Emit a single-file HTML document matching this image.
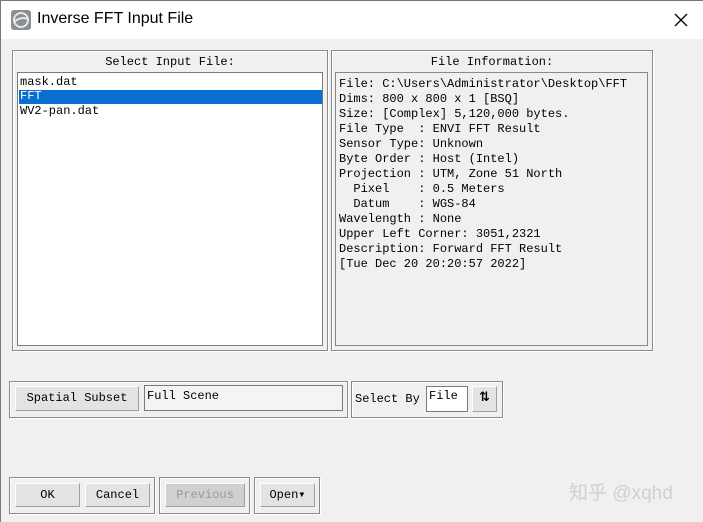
<!DOCTYPE html><html><head><style>
body{margin:0;width:703px;height:522px;background:#f0f0f0;position:relative;overflow:hidden;font-family:"Liberation Mono","Noto Sans CJK SC",monospace;font-size:12px;color:#000}
.a{position:absolute;box-sizing:border-box}
.fr{border:1px solid #8a8a8a;box-shadow:inset 1px 1px 0 #fff,1px 1px 0 #fff}
.in{border:1px solid #7a7a7a;background:#fff}
.bt{background:#e3e3e3;border:1px solid #fff;border-right-color:#a0a0a0;border-bottom-color:#a0a0a0;text-align:center;line-height:22px}
.t{white-space:pre;line-height:15px}
</style></head><body>
<div class="a" style="left:0;top:0;width:703px;height:39px;background:#fff;border-left:1px solid #777;border-top:1px solid #777"></div>
<svg class="a" style="left:10px;top:9px" width="22" height="22" viewBox="0 0 22 22"><rect x="1" y="1" width="20" height="20" rx="3" fill="#8a8f96"/><circle cx="11" cy="11" r="7" fill="none" stroke="#e8e8e8" stroke-width="2"/><path d="M4 13 Q11 7 18 10" stroke="#e8e8e8" stroke-width="2" fill="none"/></svg>
<div class="a" style="left:37px;top:10px;font-family:'Liberation Sans',sans-serif;font-size:16px">Inverse FFT Input File</div>
<svg class="a" style="left:674px;top:13px" width="14" height="14" viewBox="0 0 14 14"><path d="M1 1L13 13M13 1L1 13" stroke="#000" stroke-width="1.3"/></svg>
<div class="a fr" style="left:12px;top:50px;width:316px;height:301px"></div>
<div class="a" style="left:12px;top:55px;width:316px;text-align:center">Select Input File:</div>
<div class="a in" style="left:17px;top:72px;width:306px;height:274px"></div>
<div class="a t" style="left:20px;top:75px">mask.dat</div>
<div class="a" style="left:19px;top:90px;width:303px;height:14px;background:#0a6ed1"></div>
<div class="a t" style="left:20px;top:89px;color:#fff">FFT</div>
<div class="a t" style="left:20px;top:104px">WV2-pan.dat</div>
<div class="a fr" style="left:331px;top:50px;width:322px;height:301px"></div>
<div class="a" style="left:331px;top:55px;width:322px;text-align:center">File Information:</div>
<div class="a" style="left:335px;top:72px;width:313px;height:274px;border:1px solid #8a8a8a"></div>
<div class="a t" style="left:339px;top:77px">File: C:\Users\Administrator\Desktop\FFT
Dims: 800 x 800 x 1 [BSQ]
Size: [Complex] 5,120,000 bytes.
File Type  : ENVI FFT Result
Sensor Type: Unknown
Byte Order : Host (Intel)
Projection : UTM, Zone 51 North
  Pixel    : 0.5 Meters
  Datum    : WGS-84
Wavelength : None
Upper Left Corner: 3051,2321
Description: Forward FFT Result
[Tue Dec 20 20:20:57 2022]</div>
<div class="a fr" style="left:9px;top:381px;width:339px;height:37px"></div>
<div class="a bt" style="left:15px;top:386px;width:124px;height:25px">Spatial Subset</div>
<div class="a in" style="left:144px;top:385px;width:199px;height:26px;background:#f4f4f4"></div>
<div class="a t" style="left:147px;top:389px">Full Scene</div>
<div class="a fr" style="left:351px;top:381px;width:152px;height:37px"></div>
<div class="a t" style="left:355px;top:392px">Select By</div>
<div class="a in" style="left:426px;top:386px;width:42px;height:26px"></div>
<div class="a t" style="left:429px;top:389px">File</div>
<div class="a bt" style="left:472px;top:386px;width:25px;height:26px;font-family:'DejaVu Sans';font-weight:bold;font-size:13px">⇅</div>
<div class="a fr" style="left:9px;top:477px;width:146px;height:37px"></div>
<div class="a bt" style="left:15px;top:483px;width:65px;height:24px">OK</div>
<div class="a bt" style="left:85px;top:483px;width:65px;height:24px">Cancel</div>
<div class="a fr" style="left:159px;top:477px;width:91px;height:37px"></div>
<div class="a bt" style="left:165px;top:483px;width:80px;height:24px;background:#d0d0d0;color:#999">Previous</div>
<div class="a fr" style="left:254px;top:477px;width:66px;height:37px"></div>
<div class="a bt" style="left:260px;top:483px;width:55px;height:24px">Open▾</div>
<div class="a" style="left:569px;top:478px;font-family:'Liberation Sans','Noto Sans CJK SC',sans-serif;font-size:19px;color:#d0d0d0">知乎 @xqhd</div>
<div class="a" style="left:0;top:39px;width:1px;height:483px;background:#777"></div>
</body></html>
